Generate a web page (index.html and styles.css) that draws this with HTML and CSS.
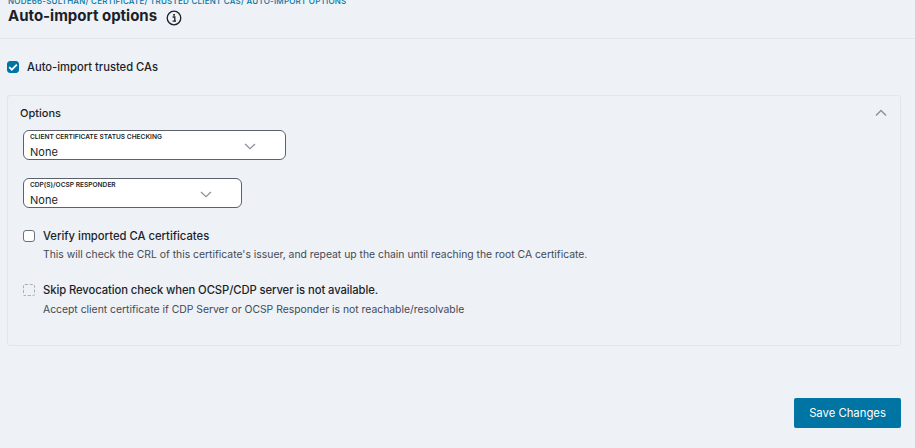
FILE: index.html
```html
<!DOCTYPE html>
<html>

<head>
    <title>Auto-import options</title>

    <link rel="stylesheet" href="styles.css">
</head>

<body>
    <header class="page-header">
        <div class="breadcrumb">
            <a href="#">NODE66-SULTHAN</a>/
            <a href="#">CERTIFICATE</a>/
            <a href="#">TRUSTED CLIENT CAS</a>/
            <a href="#">AUTO-IMPORT OPTIONS</a>
        </div>
        <div class="title-row">
            <h1>Auto-import options</h1>
            <svg class="info-icon" width="16" height="16" viewBox="0 0 16 16">
                <circle cx="8" cy="8" r="6.8" fill="none" stroke="#1b1f2a" stroke-width="1.3"/>
                <rect x="7.2" y="4" width="1.7" height="1.7" fill="#1b1f2a"/>
                <path d="M6.6 7h2.2v4M6.6 11.2h3.4" fill="none" stroke="#1b1f2a" stroke-width="1.3"/>
            </svg>
        </div>
    </header>

    <section class="auto-import">
        <span class="check checked">
            <svg width="10" height="10" viewBox="0 0 10 10">
                <path d="M1.2 5.2l2.6 2.5 5-5" fill="none" stroke="#fff" stroke-width="1.8"/>
            </svg>
        </span>
        <label>Auto-import trusted CAs</label>
    </section>

    <section class="panel">
        <div class="panel-head">
            <h2>Options</h2>
            <svg width="12" height="8" viewBox="0 0 12 8">
                <path d="M1 6.5l5-5 5 5" fill="none" stroke="#8a8f99" stroke-width="1.4"/>
            </svg>
        </div>

        <div class="select select-wide">
            <div class="select-text">
                <span class="select-label">CLIENT CERTIFICATE STATUS CHECKING</span>
                <span class="select-value">None</span>
            </div>
            <svg class="select-arrow" width="12" height="7" viewBox="0 0 12 7">
                <path d="M1 1l5 4.6L11 1" fill="none" stroke="#8a8f99" stroke-width="1.2"/>
            </svg>
        </div>

        <div class="select select-narrow">
            <div class="select-text">
                <span class="select-label">CDP(S)/OCSP RESPONDER</span>
                <span class="select-value">None</span>
            </div>
            <svg class="select-arrow" width="12" height="7" viewBox="0 0 12 7">
                <path d="M1 1l5 4.6L11 1" fill="none" stroke="#8a8f99" stroke-width="1.2"/>
            </svg>
        </div>

        <div class="option">
            <span class="check"></span>
            <div>
                <div class="option-title">Verify imported CA certificates</div>
                <p>This will check the CRL of this certificate's issuer, and repeat up the chain until reaching the root CA certificate.</p>
            </div>
        </div>

        <div class="option option-last">
            <span class="check disabled"></span>
            <div>
                <div class="option-title">Skip Revocation check when OCSP/CDP server is not available.</div>
                <p>Accept client certificate if CDP Server or OCSP Responder is not reachable/resolvable</p>
            </div>
        </div>
    </section>

    <div class="actions">
        <button>Save Changes</button>
    </div>
</body>

</html>
```

FILE: styles.css
```css
body {
    font-family: Inter, "Noto Sans", sans-serif;
    margin: 0;
    height: 448px;
    overflow: hidden;
    background-color: #eef1f5;
    color: #1b1f2a;
}

.page-header {
    height: 38px;
    padding-left: 8px;
    border-bottom: 1px solid #e2e5ea;
    overflow: hidden;
}

.breadcrumb {
    margin-top: -4px;
    height: 11px;
    line-height: 11px;
    font-size: 8px;
    font-weight: 500;
    letter-spacing: 0.23px;
    color: #0074a3;
}

.breadcrumb a {
    color: #0074a3;
    text-decoration: none;
}

.title-row {
    display: flex;
    align-items: center;
    gap: 9px;
    margin-top: -1px;
}

h1 {
    margin: 0;
    font-size: 15px;
    line-height: 20px;
    font-weight: 700;
}

.info-icon {
    margin-top: 4px;
}

.auto-import {
    display: flex;
    align-items: center;
    gap: 8px;
    padding: 21px 7px 0;
    height: 13px;
    font-size: 11.2px;
    font-weight: 500;
}

.check {
    display: flex;
    align-items: center;
    justify-content: center;
    flex: none;
    box-sizing: border-box;
    width: 12px;
    height: 12px;
    background-color: #fff;
    border: 1px solid #6b7079;
    border-radius: 3px;
}

.check.checked {
    background-color: #0074a3;
    border-color: #0074a3;
}

.check.disabled {
    background-color: transparent;
    border: 1px dashed #a9adb5;
    border-radius: 2px;
}

.panel {
    box-sizing: border-box;
    width: 894px;
    height: 251px;
    margin: 22px 0 0 7px;
    padding: 0 13px 0 15px;
    border: 1px solid #e2e5ea;
    border-radius: 3px;
}

.panel-head {
    display: flex;
    align-items: center;
    justify-content: space-between;
    height: 34px;
    margin-left: -3px;
}

h2 {
    margin: 0;
    font-size: 11px;
    font-weight: 500;
}

.select {
    display: flex;
    align-items: center;
    justify-content: space-between;
    box-sizing: border-box;
    height: 30px;
    background-color: #fff;
    border: 1px solid #5c616b;
    border-radius: 6px;
    padding-left: 6px;
    padding-right: 29px;
}

.select-wide {
    width: 263px;
}

.select-narrow {
    width: 219px;
    margin-top: 18px;
}

.select-text {
    display: flex;
    flex-direction: column;
}

.select-label {
    font-size: 6.6px;
    line-height: 10px;
    font-weight: 600;
    margin-top: 1px;
}

.select-value {
    font-size: 11px;
    line-height: 14px;
    margin-top: 3px;
}

.select-arrow {
    margin-top: 3px;
}

.option {
    display: flex;
    gap: 8px;
    margin-top: 21px;
}

.option .check {
    margin-top: 1px;
}

.option-title {
    font-size: 11.25px;
    line-height: 14px;
    font-weight: 500;
}

.option-last .option-title {
    letter-spacing: -0.08px;
}

.option p {
    margin: 5px 0 0;
    font-size: 10.37px;
    line-height: 14px;
    color: #444a55;
}

.option-last p {
    margin-top: 6px;
}

.actions {
    display: flex;
    justify-content: flex-end;
    padding: 52px 14px 0 0;
}

button {
    width: 107px;
    height: 30px;
    background-color: #0074a3;
    color: #fff;
    border: none;
    border-radius: 2px;
    font-family: inherit;
    font-size: 11.3px;
    cursor: pointer;
}
```
